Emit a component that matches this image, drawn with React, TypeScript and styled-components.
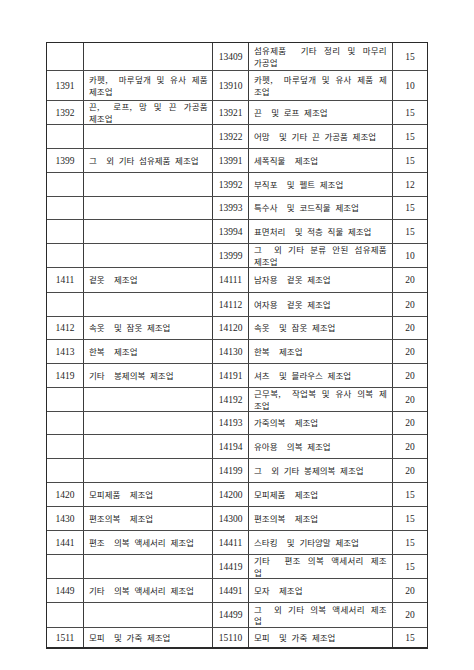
import styled, { createGlobalStyle } from "styled-components";

const GlobalStyle = createGlobalStyle`
  * { box-sizing: border-box; }
  body {
    margin: 0;
    background: #ffffff;
    color: #1c1c1c;
  }
`;

type RowData = {
  h: number;
  code: string;
  name: string[];
  sub: string;
  desc: string[];
  rate: string;
};

////////// Data
const rows: RowData[] = [
  { h: 28, code: "", name: [], sub: "13409", desc: ["섬유제품  기타 정리 및 마무리", "가공업"], rate: "15" },
  { h: 30, code: "1391", name: ["카펫,  마루덮개 및 유사 제품", "제조업"], sub: "13910", desc: ["카펫,  마루덮개 및 유사 제품 제", "조업"], rate: "10" },
  { h: 24, code: "1392", name: ["끈,  로프, 망 및 끈 가공품", "제조업"], sub: "13921", desc: ["끈  및 로프 제조업"], rate: "15" },
  { h: 24, code: "", name: [], sub: "13922", desc: ["어망  및 기타 끈 가공품 제조업"], rate: "15" },
  { h: 24, code: "1399", name: ["그  외 기타 섬유제품 제조업"], sub: "13991", desc: ["세폭직물  제조업"], rate: "15" },
  { h: 24, code: "", name: [], sub: "13992", desc: ["부직포  및 펠트 제조업"], rate: "12" },
  { h: 23, code: "", name: [], sub: "13993", desc: ["특수사  및 코드직물 제조업"], rate: "15" },
  { h: 24, code: "", name: [], sub: "13994", desc: ["표면처리  및 적층 직물 제조업"], rate: "15" },
  { h: 24, code: "", name: [], sub: "13999", desc: ["그  외 기타 분류 안된 섬유제품", "제조업"], rate: "10" },
  { h: 25, code: "1411", name: ["겉옷  제조업"], sub: "14111", desc: ["남자용  겉옷 제조업"], rate: "20" },
  { h: 24, code: "", name: [], sub: "14112", desc: ["여자용  겉옷 제조업"], rate: "20" },
  { h: 23, code: "1412", name: ["속옷  및 잠옷 제조업"], sub: "14120", desc: ["속옷  및 잠옷 제조업"], rate: "20" },
  { h: 24, code: "1413", name: ["한복  제조업"], sub: "14130", desc: ["한복  제조업"], rate: "20" },
  { h: 24, code: "1419", name: ["기타  봉제의복 제조업"], sub: "14191", desc: ["셔츠  및 블라우스 제조업"], rate: "20" },
  { h: 24, code: "", name: [], sub: "14192", desc: ["근무복,  작업복 및 유사 의복 제", "조업"], rate: "20" },
  { h: 23, code: "", name: [], sub: "14193", desc: ["가죽의복  제조업"], rate: "20" },
  { h: 24, code: "", name: [], sub: "14194", desc: ["유아용  의복 제조업"], rate: "20" },
  { h: 24, code: "", name: [], sub: "14199", desc: ["그  외 기타 봉제의복 제조업"], rate: "20" },
  { h: 24, code: "1420", name: ["모피제품  제조업"], sub: "14200", desc: ["모피제품  제조업"], rate: "15" },
  { h: 24, code: "1430", name: ["편조의복  제조업"], sub: "14300", desc: ["편조의복  제조업"], rate: "15" },
  { h: 24, code: "1441", name: ["편조  의복 액세서리 제조업"], sub: "14411", desc: ["스타킹  및 기타양말 제조업"], rate: "15" },
  { h: 24, code: "", name: [], sub: "14419", desc: ["기타  편조 의복 액세서리 제조", "업"], rate: "15" },
  { h: 24, code: "1449", name: ["기타  의복 액세서리 제조업"], sub: "14491", desc: ["모자  제조업"], rate: "20" },
  { h: 25, code: "", name: [], sub: "14499", desc: ["그  외 기타 의복 액세서리 제조", "업"], rate: "20" },
  { h: 19, code: "1511", name: ["모피  및 가죽 제조업"], sub: "15110", desc: ["모피  및 가죽 제조업"], rate: "15" },
];

////////// Rendering
const Lines = ({ lines }: { lines: string[] }) => (
  <TextBlock>
    {lines.map((line, idx) => (
      <Line key={idx} $justify={idx < lines.length - 1}>
        {line}
      </Line>
    ))}
  </TextBlock>
);

const App = () => {
  return (
    <>
      <GlobalStyle />
      <Page>
        <Table>
          {rows.map((r, idx) => (
            <Row key={idx} $h={r.h} $last={idx === rows.length - 1}>
              <NumCell>{r.code}</NumCell>
              <TextCell>
                <Lines lines={r.name} />
              </TextCell>
              <NumCell>{r.sub}</NumCell>
              <TextCell $wide>
                <Lines lines={r.desc} />
              </TextCell>
              <NumCell $end>{r.rate}</NumCell>
            </Row>
          ))}
        </Table>
      </Page>
    </>
  );
};

export default App;

const Page = styled.div`
  width: 474px;
  height: 670px;
  padding: 42px 0 0 46px;
  background: #ffffff;
`;

const Table = styled.div`
  width: 382px;
  border: 1px solid #2a2a2a;
  border-bottom-width: 2px;
`;

const Row = styled.div<{ $h: number; $last?: boolean }>`
  display: grid;
  grid-template-columns: 37px 129px 36px 144px 34px;
  height: ${({ $h }) => $h}px;
  border-bottom: ${({ $last }) => ($last ? "none" : "1px solid #4a4a4a")};
`;

const NumCell = styled.div<{ $end?: boolean }>`
  display: flex;
  align-items: center;
  justify-content: center;
  border-right: ${({ $end }) => ($end ? "none" : "1px solid #3a3a3a")};
  font-family: "Liberation Serif", "Times New Roman", serif;
  font-size: 9.5px;
  color: #1e1e1e;
`;

const TextCell = styled.div<{ $wide?: boolean }>`
  display: flex;
  align-items: center;
  padding: ${({ $wide }) => ($wide ? "0 5px" : "0 4px 0 5px")};
  border-right: 1px solid #3a3a3a;
  font-family: "Noto Sans CJK KR", "Noto Sans", sans-serif;
  font-size: 8.5px;
  font-weight: 400;
  color: #262626;
`;

const TextBlock = styled.div`
  width: 100%;
  line-height: 11.5px;
`;

const Line = styled.div<{ $justify: boolean }>`
  white-space: ${({ $justify }) => ($justify ? "pre-wrap" : "pre")};
  word-spacing: ${({ $justify }) => ($justify ? "1px" : "2.8px")};
  letter-spacing: ${({ $justify }) => ($justify ? "0.3px" : "0")};
  text-align: ${({ $justify }) => ($justify ? "justify" : "left")};
  text-align-last: ${({ $justify }) => ($justify ? "justify" : "left")};
`;
